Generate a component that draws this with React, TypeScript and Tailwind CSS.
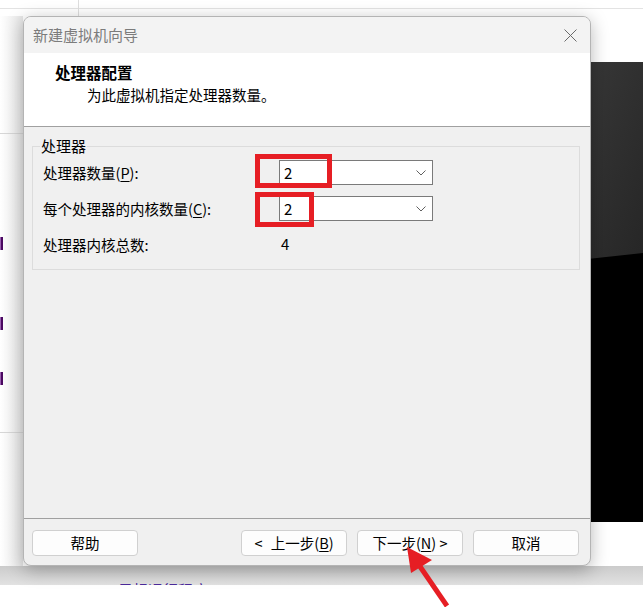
import React from "react";

const font = { fontFamily: '"Noto Sans CJK SC", "Liberation Sans", sans-serif' };

function Chevron() {
  return (
    <svg width="10" height="6" viewBox="0 0 10 6" className="text-[#606060]">
      <path d="M0.5 0.5 L5 5 L9.5 0.5" fill="none" stroke="currentColor" strokeWidth="1" />
    </svg>
  );
}

function Select({ value }: { value: string }) {
  return (
    <div className="w-[154px] h-[25px] bg-white border border-[#7a7a7a] flex items-center justify-between pl-[4px] pr-[6px]">
      <span className="text-[15px] text-black leading-none">{value}</span>
      <Chevron />
    </div>
  );
}

function Btn({ children }: { children: React.ReactNode }) {
  return (
    <button className="w-[106px] h-[26px] rounded-[4px] border border-[#d0d0d0] bg-[#fdfdfd] text-[14.5px] text-black flex items-center justify-center leading-none">
      {children}
    </button>
  );
}

function Key({ k }: { k: string }) {
  return (
    <>
      (<span className="underline underline-offset-2">{k}</span>)
    </>
  );
}

export default function App() {
  return (
    <div className="relative w-[643px] h-[607px] overflow-hidden bg-white" style={font}>
      {/* page behind the dialog */}
      <div className="absolute left-0 top-[8px] w-full h-px bg-[#e3e3e3]" />
      <div className="absolute left-[78px] top-0 w-px h-[585px] bg-[#dedede]" />
      <div className="absolute left-0 top-[16px] w-[23px] h-[569px] bg-gradient-to-r from-white to-[#e6e6e6]" />
      <div className="absolute left-0 top-[133px] w-[23px] h-px bg-[#d6d6d6]" />
      <div className="absolute left-0 top-[432px] w-[23px] h-px bg-[#d6d6d6]" />
      <div className="absolute left-0 top-[237px] w-[3px] h-[13px] border-r-2 border-[#4a0860] bg-[#9a60b0]" />
      <div className="absolute left-0 top-[317px] w-[3px] h-[13px] border-r-2 border-[#4a0860] bg-[#9a60b0]" />
      <div className="absolute left-0 top-[372px] w-[3px] h-[13px] border-r-2 border-[#4a0860] bg-[#9a60b0]" />

      <svg className="absolute left-[560px] top-[62px]" width="83" height="460" viewBox="0 0 83 460">
        <defs>
          <linearGradient id="dk" x1="0" y1="0" x2="1" y2="1">
            <stop offset="0" stopColor="#3a3a3a" />
            <stop offset="1" stopColor="#262626" />
          </linearGradient>
        </defs>
        <rect width="83" height="460" fill="#000" />
        <polygon points="0,0 83,0 83,191 0,200" fill="url(#dk)" />
      </svg>

      <div className="absolute left-0 top-[566px] w-full h-[19px] bg-gradient-to-b from-[#cbcbcb] to-[#e2e2e2]" />
      <span className="absolute left-[118px] top-[582px] text-[15px] text-[#4b2a9a] leading-none">目标运行程序</span>
      <div className="absolute left-0 top-[585px] w-full h-[22px] bg-white" />

      {/* dialog */}
      <div className="absolute left-[23px] top-[16px] w-[568px] h-[550px] flex flex-col rounded-[8px] border border-[#b4b4b4] bg-[#f0f0f0] overflow-hidden shadow-[0_4px_18px_rgba(0,0,0,0.28)]">
        <div className="h-[36px] bg-[#f3f3f3] flex items-center justify-between pl-[9px] pr-[13px]">
          <span className="text-[15px] text-[#7c7c7c]">新建虚拟机向导</span>
          <svg width="13" height="13" viewBox="0 0 13 13">
            <path d="M0.5 0.5 L12.5 12.5 M12.5 0.5 L0.5 12.5" stroke="#6a6a6a" strokeWidth="1" />
          </svg>
        </div>
        <div className="h-[73px] bg-white pt-[9px] pl-[31px] leading-[20px] text-black">
          <div className="font-bold text-[15.5px]">处理器配置</div>
          <div className="mt-[3px] pl-[32px] text-[14.5px]">为此虚拟机指定处理器数量。</div>
        </div>
        <div className="h-px bg-[#a0a0a0]" />

        <div className="flex-1 pt-[19px] px-[8px]">
          <div className="relative w-[548px] h-[124px] border border-[#dcdcdc] pt-[13px] pl-[10px]">
            <span className="absolute left-[7px] top-[-11px] px-[1px] bg-[#f0f0f0] text-[15px] leading-[20px] text-black">
              处理器
            </span>
            <div className="flex flex-col gap-[11px] text-[14.5px] text-black">
              <div className="flex items-center h-[25px]">
                <span className="w-[236px]">
                  处理器数量<Key k="P" />:
                </span>
                <div className="relative">
                  <Select value="2" />
                  <div className="absolute left-[-24px] top-[-6px] w-[77px] h-[34px] border-[5px] border-[#e61e24]" />
                </div>
              </div>
              <div className="flex items-center h-[25px]">
                <span className="w-[236px]">
                  每个处理器的内核数量<Key k="C" />:
                </span>
                <div className="relative">
                  <Select value="2" />
                  <div className="absolute left-[-24px] top-[-4px] w-[59px] h-[35px] border-[5px] border-[#e61e24]" />
                </div>
              </div>
              <div className="flex items-center h-[25px]">
                <span className="w-[236px]">处理器内核总数:</span>
                <span className="pl-[2px] text-[15px]">4</span>
              </div>
            </div>
          </div>
        </div>

        <div className="h-px bg-[#a0a0a0]" />
        <div className="h-[46px] pt-[11px] pl-[8px] pr-[11px] flex items-start justify-between">
          <Btn>帮助</Btn>
          <div className="flex gap-[10px]">
            <Btn>
              &lt;<span className="w-[5px]" />&nbsp;上一步<Key k="B" />
            </Btn>
            <Btn>
              下一步<Key k="N" />&nbsp;&gt;
            </Btn>
            <Btn>取消</Btn>
          </div>
        </div>
      </div>

      {/* annotation arrow */}
      <svg className="absolute left-0 top-0 pointer-events-none" width="643" height="607" viewBox="0 0 643 607">
        <line x1="447" y1="606" x2="419" y2="565" stroke="#e61e24" strokeWidth="5" />
        <polygon points="407,547 432,560 411,573" fill="#e61e24" />
      </svg>
    </div>
  );
}
